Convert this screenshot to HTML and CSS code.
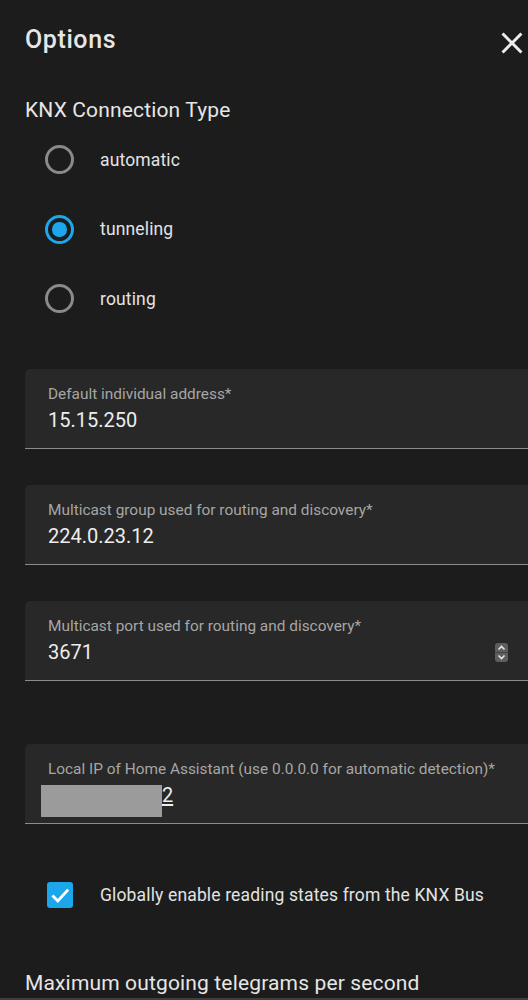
FILE: index.html
```html
<!DOCTYPE html>
<html lang="en">
<head>
<meta charset="utf-8">
<title>Options</title>
<link rel="stylesheet" href="styles.css">
</head>
<body>
<div class="dialog">
  <header class="header">
    <h2 class="title">Options</h2>
    <button class="close" aria-label="Close">
      <svg viewBox="0 0 24 24"><path d="M19,6.41L17.59,5L12,10.59L6.41,5L5,6.41L10.59,12L5,17.59L6.41,19L12,13.41L17.59,19L19,17.59L13.41,12L19,6.41Z"/></svg>
    </button>
  </header>

  <h3 class="section">KNX Connection Type</h3>
  <div class="radios">
    <div class="radio-row"><span class="radio"></span><span class="opt">automatic</span></div>
    <div class="radio-row"><span class="radio checked"></span><span class="opt">tunneling</span></div>
    <div class="radio-row"><span class="radio"></span><span class="opt">routing</span></div>
  </div>

  <div class="field first">
    <div class="flabel">Default individual address*</div>
    <div class="fvalue">15.15.250</div>
  </div>

  <div class="field">
    <div class="flabel">Multicast group used for routing and discovery*</div>
    <div class="fvalue">224.0.23.12</div>
  </div>

  <div class="field">
    <div class="flabel">Multicast port used for routing and discovery*</div>
    <div class="fvalue">
      <span>3671</span>
      <span class="spinner">
        <svg viewBox="0 0 13 19">
          <rect x="0" y="0" width="13" height="19" rx="3" fill="#5e5e5e"/>
          <line x1="0" y1="9.5" x2="13" y2="9.5" stroke="#444" stroke-width="1"/>
          <polyline points="3.5,6.5 6.5,3.5 9.5,6.5" fill="none" stroke="#e6e6e6" stroke-width="1.6"/>
          <polyline points="3.5,12.5 6.5,15.5 9.5,12.5" fill="none" stroke="#e6e6e6" stroke-width="1.6"/>
        </svg>
      </span>
    </div>
  </div>

  <div class="field wide-gap">
    <div class="flabel">Local IP of Home Assistant (use 0.0.0.0 for automatic detection)*</div>
    <div class="fvalue ip">
      <span class="redact"></span><span class="tail">2</span>
    </div>
  </div>

  <div class="check-row">
    <span class="checkbox">
      <svg viewBox="0 0 24 24"><polyline points="5,12.5 10,17.5 19.5,7" fill="none" stroke="#ffffff" stroke-width="2.6"/></svg>
    </span>
    <span class="opt check-label">Globally enable reading states from the KNX Bus</span>
  </div>

  <h3 class="section last">Maximum outgoing telegrams per second</h3>
</div>
<div class="bottom-line"></div>
</body>
</html>
```

FILE: styles.css
```css
html, body {
  margin: 0;
  padding: 0;
}

body {
  background: #1c1c1c;
  font-family: Roboto, "Noto Sans", "Liberation Sans", sans-serif;
  color: #e3e3e3;
  overflow: hidden;
}

.dialog {
  padding-left: 25px;
}

.header {
  display: flex;
  justify-content: space-between;
  align-items: flex-start;
  padding-top: 25px;
}

.title {
  margin: 1px 0 0;
  font-size: 25px;
  font-weight: 500;
  line-height: 28px;
  letter-spacing: 0.6px;
  color: #e6e6e6;
}

.close {
  margin-right: -2px;
  width: 36px;
  height: 36px;
  padding: 0;
  border: 0;
  background: none;
  color: #ececec;
}

.close svg {
  display: block;
  width: 36px;
  height: 36px;
  fill: currentColor;
}

.section {
  margin: 35px 0 0;
  font-size: 21px;
  font-weight: 400;
  line-height: 28px;
  letter-spacing: 0.15px;
  color: #e6e6e6;
}

.section.last {
  margin-top: 50px;
}

.radios {
  margin-top: 1px;
}

.radio-row {
  display: flex;
  align-items: center;
  height: 69.5px;
}

.radio {
  box-sizing: border-box;
  width: 29px;
  height: 29px;
  margin-left: 20px;
  border: 3px solid #8a8a8a;
  border-radius: 50%;
  display: flex;
  align-items: center;
  justify-content: center;
  flex: none;
}

.radio.checked {
  border-color: #1ca7ec;
}

.radio.checked::after {
  content: "";
  width: 14.5px;
  height: 14.5px;
  border-radius: 50%;
  background: #1ca7ec;
}

.opt {
  margin-left: 26px;
  font-size: 17.5px;
  line-height: 24px;
  letter-spacing: 0.15px;
  color: #e3e3e3;
}

.field {
  margin-top: 36px;
  background: #282828;
  border-top-left-radius: 5px;
  padding: 15px 20px 14px 23px;
  border-bottom: 1px solid #8c8c8c;
}

.field.first {
  margin-top: 35.5px;
}

.field.wide-gap {
  margin-top: 63px;
}

.flabel {
  font-size: 15.4px;
  line-height: 20px;
  letter-spacing: 0;
  color: #a6a6a6;
  white-space: nowrap;
}

.fvalue {
  margin-top: 2px;
  height: 28px;
  display: flex;
  align-items: center;
  justify-content: space-between;
  font-size: 20px;
  line-height: 28px;
  color: #ededed;
}

.spinner {
  display: block;
  width: 13px;
  height: 19px;
  flex: none;
}

.spinner svg {
  display: block;
  width: 13px;
  height: 19px;
}

.fvalue.ip {
  justify-content: flex-start;
  align-items: flex-start;
}

.redact {
  flex: none;
  width: 121px;
  height: 32px;
  margin: 4px 0 -8px -7px;
  background: #9b9b9b;
}

.tail {
  text-decoration: underline;
  text-underline-offset: 2px;
}

.check-row {
  display: flex;
  align-items: center;
  height: 48px;
  margin-top: 47px;
}

.checkbox {
  flex: none;
  display: block;
  width: 26px;
  height: 26px;
  margin-left: 22px;
  border-radius: 3px;
  background: #1ca7ec;
}

.checkbox svg {
  display: block;
  width: 26px;
  height: 26px;
}

.check-label {
  margin-left: 27px;
}

.bottom-line {
  margin-top: 1px;
  height: 2px;
  background: #3e3e3e;
}
```
